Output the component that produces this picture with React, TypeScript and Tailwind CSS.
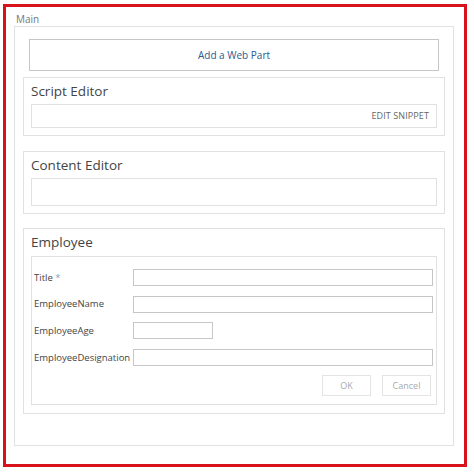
import React from "react";

const font = { fontFamily: '"Open Sans", "Noto Sans", sans-serif' };

function Field({ label, required, short }: { label: string; required?: boolean; short?: boolean }) {
  return (
    <div className="flex items-center h-[17px]">
      <div className="w-[99px] shrink-0 text-[9.5px] text-[#444] whitespace-nowrap leading-none">
        {label}
        {required && <span className="text-[#8ea0b8]"> *</span>}
      </div>
      <div
        className={`h-[17px] border border-[#c6c6c6] bg-white ${short ? "w-[80px]" : "w-[300px]"}`}
      />
    </div>
  );
}

function WebPart({
  title,
  children,
  className = "",
  titleClass = "h-[26px]",
}: {
  title: string;
  children: React.ReactNode;
  className?: string;
  titleClass?: string;
}) {
  return (
    <div className={`border border-[#e1e1e1] px-[7px] ${className}`}>
      <div className={`text-[13.5px] leading-[24px] text-[#444] pt-[1px] ${titleClass}`}>{title}</div>
      {children}
    </div>
  );
}

export default function App() {
  return (
    <div className="w-[474px] h-[473px] bg-white relative" style={font}>
      <div className="absolute left-[3px] top-[4px] w-[464px] h-[463px] border-[3px] border-[#d9131b]">
        <div className="pl-[10px] pt-[5px] text-[10px] leading-[14px] text-[#777]">Main</div>
        <div className="ml-[8px] w-[440px] h-[420px] border border-[#e1e1e1] px-[8px] pt-[12px]">
          <div className="mx-[6px] h-[32px] border border-[#c6c6c6] flex items-center justify-center text-[10px] text-[#2a5a8f]">
            Add a Web Part
          </div>

          <WebPart title="Script Editor" className="mt-[6px] pb-[7px]">
            <div className="h-[24px] border border-[#e1e1e1] flex items-center justify-end pr-[7px] text-[9px] text-[#666] tracking-[0.1px]">
              EDIT SNIPPET
            </div>
          </WebPart>

          <WebPart title="Content Editor" className="mt-[15px] pb-[7px]">
            <div className="h-[28px] border border-[#e1e1e1]" />
          </WebPart>

          <WebPart title="Employee" className="mt-[14px] pb-[8px]" titleClass="h-[27px]">
            <div className="h-[149px] border border-[#e1e1e1] pl-[2px] pt-[12px] flex flex-col">
              <div className="flex flex-col gap-[9.7px]">
                <Field label="Title" required />
                <Field label="EmployeeName" />
                <Field label="EmployeeAge" short />
                <Field label="EmployeeDesignation" />
              </div>
              <div className="flex justify-end gap-[11px] pr-[5px] mt-[9px]">
                <div className="w-[49px] h-[21px] border border-[#e4e4e4] flex items-center justify-center text-[9px] text-[#aaa]">
                  OK
                </div>
                <div className="w-[49px] h-[21px] border border-[#e4e4e4] flex items-center justify-center text-[9px] text-[#aaa]">
                  Cancel
                </div>
              </div>
            </div>
          </WebPart>
        </div>
      </div>
    </div>
  );
}
